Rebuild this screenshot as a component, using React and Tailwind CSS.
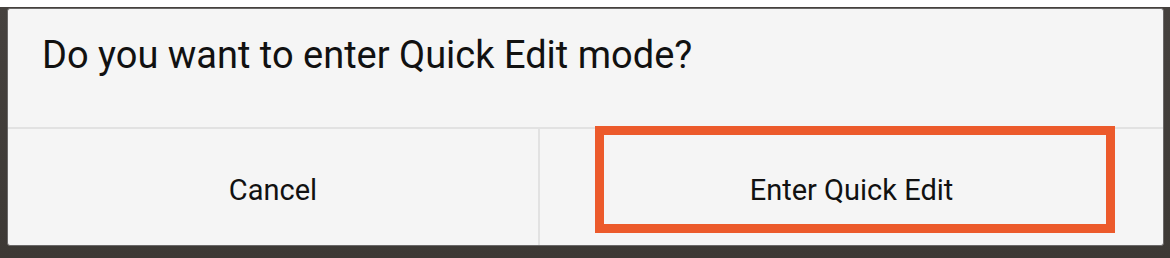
export default function App() {
  const font = { fontFamily: 'Roboto, "Noto Sans", sans-serif' }

  return (
    <div
      className="w-[1170px] h-[258px] overflow-hidden bg-[linear-gradient(to_bottom,#ffffff_0,#ffffff_7px,#45413e_7px,#3d3935_100%)] pt-[8px] pl-[7px] pr-[6px]"
      style={font}
    >
      {/* Dialog */}
      <div className="relative h-[238px] rounded-[3px] bg-[#f5f5f5] border border-[#6a6868] flex flex-col text-[#111111]">
        <div className="h-[120px] pl-[34px] pt-[24px] text-[38px] leading-[45px] border-b-2 border-[#e2e2e2]">
          Do you want to enter Quick Edit mode?
        </div>
        <div className="flex flex-1 text-[29px]">
          <button className="w-[532px] flex items-center justify-center border-r-2 border-[#e2e2e2] pt-[7px]">
            Cancel
          </button>
          <button className="flex-1 flex items-center justify-center pt-[7px]">
            Enter Quick Edit
          </button>
        </div>

        {/* Highlight */}
        <div className="absolute left-[587px] top-[117px] w-[520px] h-[107px] border-[9px] border-[#ec5a2b]" />
      </div>
    </div>
  )
}
